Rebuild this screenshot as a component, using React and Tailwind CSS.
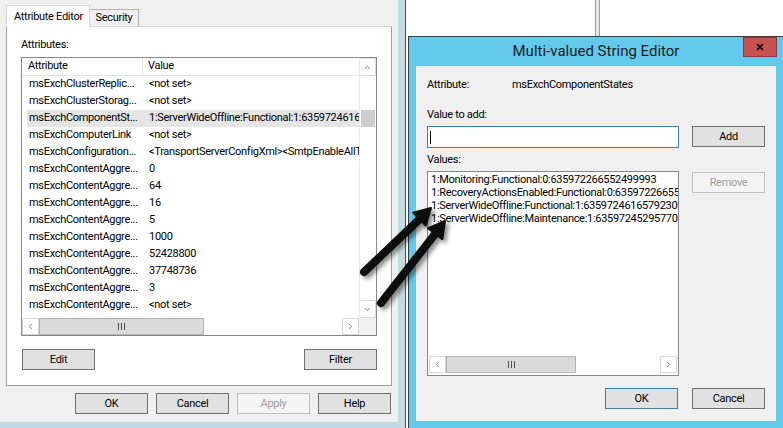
import React from 'react';
import { ChevronUp, ChevronDown, ChevronLeft, ChevronRight, X } from 'lucide-react';

const attributes = [
  ['msExchClusterReplic...', '<not set>'],
  ['msExchClusterStorag...', '<not set>'],
  ['msExchComponentSt...', '1:ServerWideOffline:Functional:1:635972461657923000'],
  ['msExchComputerLink', '<not set>'],
  ['msExchConfiguration...', '<TransportServerConfigXml><SmtpEnableAllTlsCertificates>'],
  ['msExchContentAggre...', '0'],
  ['msExchContentAggre...', '64'],
  ['msExchContentAggre...', '16'],
  ['msExchContentAggre...', '5'],
  ['msExchContentAggre...', '1000'],
  ['msExchContentAggre...', '52428800'],
  ['msExchContentAggre...', '37748736'],
  ['msExchContentAggre...', '3'],
  ['msExchContentAggre...', '<not set>'],
];

const values = [
  '1:Monitoring:Functional:0:635972266552499993',
  '1:RecoveryActionsEnabled:Functional:0:635972266552499993',
  '1:ServerWideOffline:Functional:1:635972461657923000',
  '1:ServerWideOffline:Maintenance:1:635972452957700000',
];

const WinButton = ({ children, disabled, isDefault, className = '' }) => (
  <button
    type="button"
    disabled={disabled}
    className={`flex h-[21px] w-[73px] items-center justify-center border leading-none ${
      disabled
        ? 'border-[#bfbfbf] bg-[#f4f4f4] text-[#a0a0a0]'
        : isDefault
        ? 'border-[#3c7fb1] bg-[#e1e1e1]'
        : 'border-[#707070] bg-[#e1e1e1]'
    } ${className}`}
  >
    {children}
  </button>
);

const Grip = () => (
  <div className="flex gap-[2px]">
    <span className="h-[7px] w-px bg-[#505050]" />
    <span className="h-[7px] w-px bg-[#505050]" />
    <span className="h-[7px] w-px bg-[#505050]" />
  </div>
);

const arrowIcon = { size: 9, strokeWidth: 2, color: '#606060' };

const HScrollBar = ({ thumbClass, className = '' }) => (
  <div className={`flex h-[17px] bg-white ${className}`}>
    <div className="flex w-[17px] items-center justify-center border border-[#d6d6d6]">
      <ChevronLeft {...arrowIcon} />
    </div>
    <div className={`flex items-center justify-center border border-[#b4b4b4] bg-[#dadada] ${thumbClass}`}>
      <Grip />
    </div>
    <div className="flex-1" />
    <div className="flex w-[17px] items-center justify-center border border-[#d6d6d6]">
      <ChevronRight {...arrowIcon} />
    </div>
  </div>
);

const App = () => {
  return (
    <div className="relative h-[428px] w-[783px] overflow-hidden bg-white font-['Roboto',sans-serif] text-[11px] tracking-[-0.3px] text-black">
      <div className="flex h-full">
        {/* Properties window */}
        <div className="h-full w-[405px] bg-[#c5d9e0]">
          <div className="h-[422px] w-[398px] bg-[#f0f0f0] pl-[6px] pt-[5px]">
            {/* Tabs */}
            <div className="flex h-[21px] items-end">
              <div className="relative z-10 -mb-px h-[22px] w-[84px] border border-b-0 border-[#d9d9d9] bg-white pl-[7px] pt-[3px]">
                Attribute Editor
              </div>
              <div className="flex h-[17px] w-[49px] items-center justify-center border border-b-0 border-l-0 border-[#b4b4b4] bg-[#f0f0f0]">
                Security
              </div>
            </div>

            {/* Tab panel */}
            <div className="h-[360px] w-[386px] border border-[#a0a0a0] border-t-[#d9d9d9] bg-white px-[14px]">
              <div className="mt-[11px] h-[14px] leading-[14px]">Attributes:</div>

              {/* List view */}
              <div className="mt-[5px] flex h-[279px] w-[356px] flex-col border border-[#828790] bg-white">
                <div className="flex h-[260px]">
                  <div className="flex-1 overflow-hidden whitespace-nowrap">
                    <div className="flex h-[18px] border-b border-[#e5e5e5]">
                      <div className="flex w-[121px] items-center border-r border-[#e5e5e5] pl-[6px]">Attribute</div>
                      <div className="flex items-center pl-[5px]">Value</div>
                    </div>
                    {attributes.map(([name, value], i) => (
                      <div
                        key={i}
                        className={`ml-[5px] flex h-[17px] items-center ${i === 2 ? 'bg-[#e5e5e5]' : ''}`}
                      >
                        <div className="w-[116px] shrink-0 overflow-hidden pl-[2px]">{name}</div>
                        <div className="pl-[6px]">{value}</div>
                      </div>
                    ))}
                  </div>
                  <div className="flex w-[17px] flex-col border-l border-[#e8e8e8] bg-white">
                    <div className="flex h-[18px] items-center justify-center border border-l-0 border-[#dcdcdc]">
                      <ChevronUp {...arrowIcon} />
                    </div>
                    <div className="h-[34px]" />
                    <div className="mx-px h-[17px] bg-[#cdcdcd]" />
                    <div className="flex-1" />
                    <div className="flex h-[18px] items-center justify-center border border-l-0 border-[#dcdcdc]">
                      <ChevronDown {...arrowIcon} />
                    </div>
                  </div>
                </div>
                <div className="flex h-[17px]">
                  <HScrollBar className="flex-1" thumbClass="w-[165px]" />
                  <div className="w-[17px] bg-[#f0f0f0]" />
                </div>
              </div>

              <div className="mt-[13px] flex w-[356px] justify-between">
                <WinButton className="ml-px">Edit</WinButton>
                <WinButton>Filter</WinButton>
              </div>
            </div>

            <div className="mt-[7px] flex justify-end gap-[8px] pr-[7px]">
              <WinButton>OK</WinButton>
              <WinButton>Cancel</WinButton>
              <WinButton disabled>Apply</WinButton>
              <WinButton>Help</WinButton>
            </div>
          </div>
        </div>

        <div className="h-full w-px bg-[#4d4d4d]" />

        {/* Window behind the dialog */}
        <div className="h-full flex-1 bg-white pl-[189px]">
          <div className="h-[36px] w-[5px] border-x border-[#9c9c9c] bg-[#e6e6e6]" />
        </div>
      </div>

      {/* Multi-valued String Editor dialog */}
      <div className="absolute left-[408px] top-[36px] h-[392px] w-[375px] border-l border-t border-[#3c3c3c] bg-[#64c9eb]">
        <div className="relative flex h-[29px] items-center justify-center text-[15px] tracking-normal text-[#1e1e1e]">
          Multi-valued String Editor
          <div className="absolute right-[6px] top-0 flex h-[20px] w-[34px] items-center justify-center border border-[#8c3a3a] bg-[#c75050]">
            <X size={10} strokeWidth={3.5} color="#000" />
          </div>
        </div>

        <div className="ml-[7px] h-[355px] w-[360px] bg-[#f0f0f0] px-[11px] pt-[12px]">
          <div className="flex h-[14px] items-center">
            <span className="w-[85px]">Attribute:</span>
            <span>msExchComponentStates</span>
          </div>

          <div className="mt-[16px] flex h-[14px] items-center">Value to add:</div>
          <div className="mt-[4px] flex items-start">
            <div className="flex h-[22px] w-[252px] items-center border border-[#3c7fb1] bg-white pl-[2px]">
              <span className="h-[13px] w-px bg-black" />
            </div>
            <WinButton className="ml-[13px]">Add</WinButton>
          </div>

          <div className="mt-[5px] flex h-[14px] items-center">Values:</div>
          <div className="mt-[4px] flex items-start">
            <div className="flex h-[205px] w-[252px] flex-col border border-[#828790] bg-white">
              <div className="flex-1 overflow-hidden whitespace-nowrap pl-[3px] pt-px leading-[13px]">
                {values.map((v) => (
                  <div key={v}>{v}</div>
                ))}
              </div>
              <HScrollBar className="mx-px mb-[2px]" thumbClass="w-[130px]" />
            </div>
            <WinButton disabled className="ml-[13px] mt-px">Remove</WinButton>
          </div>

          <div className="mt-[12px] flex justify-end gap-[14px]">
            <WinButton isDefault className="w-[72px]">OK</WinButton>
            <WinButton>Cancel</WinButton>
          </div>
        </div>
      </div>

      {/* Callout arrows */}
      <svg
        className="pointer-events-none absolute inset-0"
        width="783"
        height="428"
        viewBox="0 0 783 428"
      >
        <defs>
          <filter id="arrowShadow" x="-30%" y="-30%" width="160%" height="160%">
            <feDropShadow dx="3" dy="3" stdDeviation="2" floodColor="#000" floodOpacity="0.45" />
          </filter>
        </defs>
        <g filter="url(#arrowShadow)" fill="#0a0a0a" stroke="#0a0a0a" strokeLinejoin="round">
          <line x1="364" y1="272" x2="424" y2="215" strokeWidth="8" strokeLinecap="round" />
          <polygon points="431,208 425.6,225.6 413.2,212.6" strokeWidth="2" />
          <line x1="381" y1="303" x2="439" y2="229" strokeWidth="8" strokeLinecap="round" />
          <polygon points="445,221 442.3,239.1 428.1,228.1" strokeWidth="2" />
        </g>
      </svg>
    </div>
  );
};

export default App;
